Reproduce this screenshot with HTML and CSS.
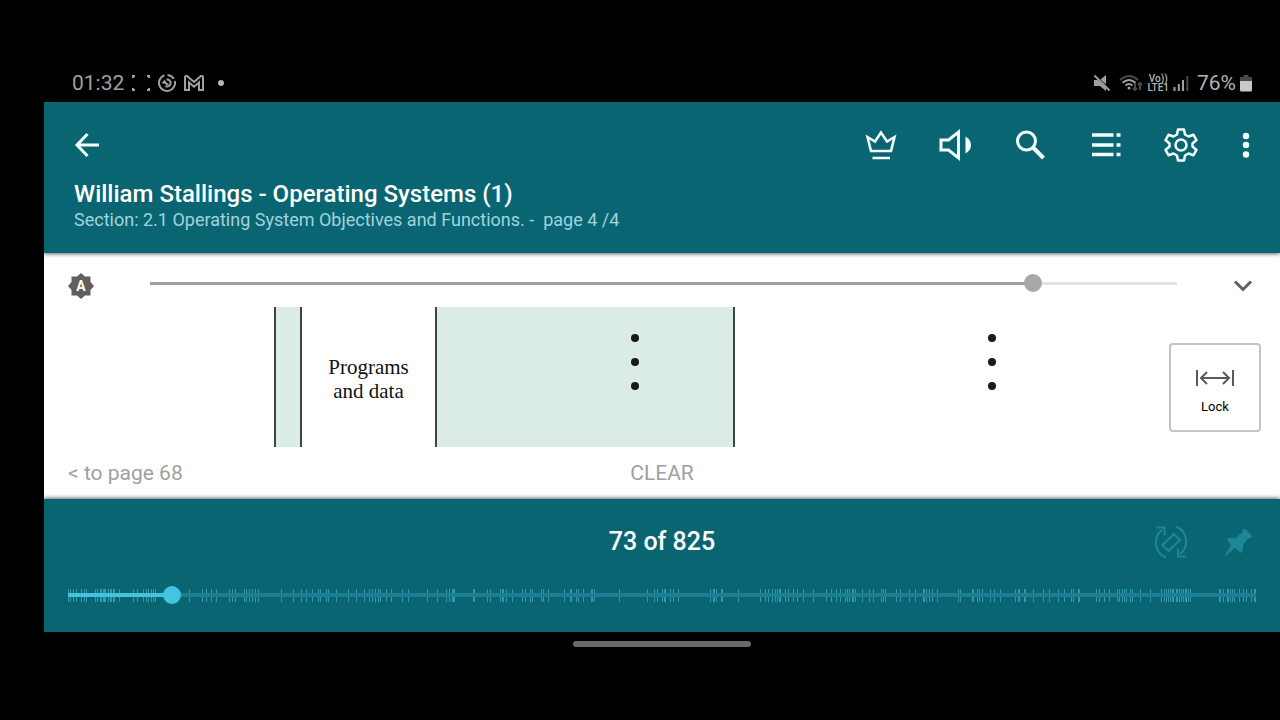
FILE: index.html
```
<!DOCTYPE html>
<html lang="en">
<head>
    <meta charset="UTF-8">
    <meta name="viewport" content="width=device-width, initial-scale=1.0">
    <title>William Stallings - Operating Systems (1)</title>
    <link rel="stylesheet" href="styles.css">
</head>
<body>

<div class="status-bar">
    <div class="status-group">
        <span class="time">01:32</span>
        <svg class="status-icon" width="18" height="18" viewBox="0 0 18 18"><path d="M1 4V2h2M15 2h2v2M17 14v2h-2M3 16H1v-2"/></svg>
        <svg class="status-icon" width="18" height="18" viewBox="0 0 18 18"><path d="M6.500 1.300A8 8 0 1 0 16.800 7M9.500 1A8 8 0 0 1 15.800 4.800M8.500 5.500a3.500 3.500 0 1 1-1 6.500"/><path class="solid" d="M3.500 9l3-3.200L9 9l2 1-2 1.500L7.500 10z"/></svg>
        <svg class="status-icon" width="20" height="18" viewBox="0 0 20 18"><path d="M1 16V3.500Q1 1.500 3 2l7 6 7-6q2-.5 2 1.500V16h-4V8.500l-5 4.200-5-4.200V16z"/></svg>
        <span class="more-dot"></span>
    </div>
    <div class="status-group status-right">
        <svg class="status-icon" width="18" height="18" viewBox="0 0 18 18"><path class="solid" d="M1 6h3.500L13 14v3l-6-5H1zM7.500 5.500L13 1v9.500z"/><path d="M1.500 1.500l15 15"/></svg>
        <svg class="status-icon wifi" width="24" height="18" viewBox="0 0 24 18"><path class="faint" d="M1 6q9-8 18 0"/><path d="M3.500 8.800q6.500-5.600 13 0M6.500 11.500q3.500-3 7 0"/><circle class="solid" cx="10" cy="14" r="1.500"/><path class="faint" d="M16 9v7m-2-2 2 2 2-2M21 16V9m-2 2 2-2 2 2"/></svg>
        <span class="volte">Vo))<br>LTE1</span>
        <svg class="status-icon" width="16" height="18" viewBox="0 0 16 18"><path d="M1.500 13v4M5.800 10v7M10 6v11"/><path class="faint" d="M14.300 2v15"/></svg>
        <span class="battery-level">76%</span>
        <svg class="battery" width="12" height="18" viewBox="0 0 12 18"><path class="faint-fill" d="M3.500 1h5v2H12v5H0V3h3.500z"/><path d="M0 7h12v9q0 1.500-1.500 1.500h-9Q0 17.500 0 16z"/></svg>
    </div>
</div>

<header class="book-header">
    <div class="toolbar">
        <button class="icon-button back" aria-label="Back">
            <svg width="26" height="26" viewBox="0 0 26 26"><path d="M25 13H3M13.500 2L3 13l10.500 11"/></svg>
        </button>
        <div class="actions">
            <button class="icon-button" aria-label="Premium">
                <svg width="36" height="36" viewBox="0 0 36 36"><path d="M8 24L4.500 10l7.500 4.500 6-9 6 9 7.500-4.500L28 24zM9.500 31h17.500"/></svg>
            </button>
            <button class="icon-button" aria-label="Read aloud">
                <svg width="36" height="36" viewBox="0 0 36 36"><path class="heavy" d="M3 13h7.500L20.500 5v26l-10-8H3z"/><path class="fill" d="M27.500 9.500q5.500 3 5.500 8.500t-5.500 8.500z"/></svg>
            </button>
            <button class="icon-button" aria-label="Search">
                <svg width="36" height="36" viewBox="0 0 36 36"><circle class="heavy" cx="13.500" cy="14" r="9"/><path class="heavier" d="M20 20.500L30.500 31"/></svg>
            </button>
            <button class="icon-button" aria-label="Contents">
                <svg width="36" height="36" viewBox="0 0 36 36"><path class="lines" d="M4 8h21.500M4 18h21.500M4 27.500h21.500M28.500 8h4M28.500 18h4M28.500 27.500h4"/></svg>
            </button>
            <button class="icon-button" aria-label="Settings">
                <svg width="36" height="36" viewBox="0 0 36 36"><path class="gear" d="M15 2.500h6l1 5 3.500 2 5-1.700 3 5.200-4 3.500v3l4 3.500-3 5.200-5-1.700-3.500 2-1 5h-6l-1-5-3.500-2-5 1.700-3-5.200 4-3.500v-3l-4-3.500 3-5.200 5 1.700 3.500-2z"/><circle class="gear" cx="18" cy="18" r="5.500"/></svg>
            </button>
            <button class="icon-button" aria-label="More options">
                <svg width="16" height="36" viewBox="0 0 16 36"><circle class="fill" cx="8" cy="9" r="3.200"/><circle class="fill" cx="8" cy="18" r="3.200"/><circle class="fill" cx="8" cy="27.500" r="3.200"/></svg>
            </button>
        </div>
    </div>
    <h1>William Stallings - Operating Systems (1)</h1>
    <p class="section-name">Section: 2.1 Operating System Objectives and Functions. -&nbsp; page 4 /4</p>
</header>

<main class="reader">
    <div class="brightness">
        <button class="icon-button" aria-label="Automatic brightness">
            <svg width="26" height="26" viewBox="0 0 26 26"><path class="badge" d="M13 0l4 3.500h5.500V9L26 13l-3.500 4v5.500H17L13 26l-4-3.500H3.500V17L0 13l3.500-4V3.500H9z"/><text x="13" y="18" text-anchor="middle">A</text></svg>
        </button>
        <div class="slider">
            <div class="track"></div>
            <input type="range" id="brightness" min="0" max="100" value="86" aria-label="Brightness">
        </div>
        <button class="icon-button" aria-label="Collapse">
            <svg width="20" height="26" viewBox="0 0 20 26"><path class="chevron" d="M2 8.500l8 8 8-8"/></svg>
        </button>
    </div>

    <div class="page">
        <div class="memory narrow"></div>
        <div class="programs">Programs<br>and data</div>
        <div class="memory wide">
            <div class="dots"><span></span><span></span><span></span></div>
        </div>
        <div class="dots outside"><span></span><span></span><span></span></div>
        <button class="lock">
            <svg width="38" height="18" viewBox="0 0 38 18"><path d="M1 1v16M37 1v16M6 9h26M11 3L5 9l6 6M27 3l6 6-6 6"/></svg>
            Lock
        </button>
    </div>

    <div class="history">
        <button>&lt; to page 68</button>
        <button class="clear">CLEAR</button>
    </div>
</main>

<footer class="book-footer">
    <div class="position">
        <label for="pageSlider">73 of 825</label>
        <div class="footer-actions">
            <button class="icon-button" aria-label="Rotation">
                <svg width="36" height="36" viewBox="0 0 36 36"><path d="M13 33.500A16 16 0 0 1 9 6M3.500 3.500h8v8M23 2.500A16 16 0 0 1 27 30M33 32.500h-8v-8"/><path d="M9.500 21L21 10l6 6-11.500 11z"/></svg>
            </button>
            <button class="icon-button" aria-label="Pin">
                <svg width="30" height="30" viewBox="0 0 30 30"><path class="pin" d="M20 1.500q6 1 9 9l-4 1-5 6q1 5-2 8.500l-6-5L1 30 8 18 3.500 12q4-2 8.500-.5l7-6z"/></svg>
            </button>
        </div>
    </div>
    <div class="slider page-slider">
        <svg class="ticks" viewBox="0 0 1188 12" preserveAspectRatio="none"><path id="ticks"/></svg>
        <div class="track"></div>
        <input type="range" id="pageSlider" min="1" max="825" value="73">
    </div>
</footer>

<div class="home-bar"></div>

<script>
    // chapter marks along the page slider
    const marks = [
        0, 2, 5, 8, 13, 16, 18, 27, 29, 32, 33, 35, 36, 37, 40, 42, 43, 45, 46, 51, 65, 69, 75, 78, 80, 83, 85, 87,
        121, 134, 138, 143, 148, 161, 164, 167, 176, 178, 181, 184, 187, 190, 213, 225, 233, 238, 244, 250, 252, 258,
        260, 268, 280, 288, 296, 301, 304, 307, 310, 312, 318, 323, 334, 340, 359, 369, 378, 381, 384, 385, 386, 405,
        406, 419, 422, 432, 434, 435, 438, 444, 454, 457, 462, 464, 473, 475, 480, 496, 502, 503, 508, 510, 515, 523,
        524, 526, 551, 579, 586, 589, 594, 596, 597, 602, 605, 610, 642, 645, 646, 648, 653, 654, 670, 692, 697,
        700, 704, 707, 709, 711, 712, 717, 720, 725, 729, 735, 745, 758, 763, 768, 772, 777, 779, 781, 784, 785, 787,
        794, 801, 805, 813, 815, 817, 828, 832, 841, 847, 855, 856, 858, 861, 864, 869, 890, 892, 904, 905, 909, 911,
        914, 922, 926, 932, 947, 950, 951, 956, 957, 965, 975, 981, 990, 996, 1003, 1005, 1010, 1011, 1028, 1031,
        1036, 1041, 1049, 1051, 1054, 1056, 1058, 1062, 1064, 1072, 1082, 1093, 1096, 1098, 1100, 1102, 1104, 1105,
        1108, 1109, 1111, 1113, 1115, 1117, 1118, 1120, 1122, 1151, 1152, 1155, 1159, 1160, 1162, 1164, 1166, 1171,
        1175, 1178, 1183, 1186, 1187
    ];
    document.getElementById('ticks').setAttribute('d', marks.map(x => `M${x} 0h1v12h-1z`).join(''));

    function fill(input) {
        const part = (input.value - input.min) / (input.max - input.min) * 100;
        input.parentElement.style.setProperty('--filled', part + '%');
    }

    document.querySelectorAll('input[type=range]').forEach(input => {
        fill(input);
        input.addEventListener('input', () => fill(input));
    });

    const pageSlider = document.getElementById('pageSlider');
    pageSlider.addEventListener('input', () => {
        document.querySelector('label[for=pageSlider]').innerText = `${pageSlider.value} of 825`;
    });
</script>

</body>
</html>
```
FILE: styles.css
```
* {
    box-sizing: border-box;
}
body {
    margin: 0;
    padding: 64px 0 0 44px;
    background-color: #000;
    font-family: Roboto, sans-serif;
}
button {
    font-family: inherit;
    padding: 0;
    border: none;
    background: none;
    cursor: pointer;
}
svg {
    display: block;
    fill: none;
}
.icon-button {
    display: block;
    flex: none;
}

/* status bar */
.status-bar {
    display: flex;
    justify-content: space-between;
    align-items: center;
    height: 38px;
    padding: 0 28px;
    color: #a0a0a0;
    font-size: 21px;
}
.status-group {
    display: flex;
    align-items: center;
    gap: 8px;
}
.status-right {
    color: #b4b4b4;
    gap: 4px;
}
.status-icon {
    stroke: #a0a0a0;
    stroke-width: 2;
}
.status-icon .solid {
    fill: #a0a0a0;
    stroke: none;
}
.status-icon .faint {
    stroke: #484848;
}
.wifi {
    margin-left: 4px;
}
.more-dot {
    width: 6px;
    height: 6px;
    margin-left: 6px;
    border-radius: 50%;
    background-color: #b4b4b4;
}
.volte {
    font-size: 10px;
    font-weight: 500;
    line-height: 9px;
    text-align: center;
}
.battery-level {
    margin-left: 4px;
}
.battery {
    fill: #c8c8c8;
}
.battery .faint-fill {
    fill: #484848;
}

/* header */
.book-header {
    position: relative;
    padding: 25px 26px 22px 30px;
    background-color: #0a6572;
    color: #fff;
    box-shadow: 0 1px 4px rgba(0, 0, 0, 0.6);
}
.toolbar,
.actions {
    display: flex;
    align-items: center;
    justify-content: space-between;
}
.actions {
    gap: 39px;
}
.toolbar svg {
    stroke: #f4ffff;
    stroke-width: 2.5;
}
.toolbar .back svg,
.toolbar .heavy {
    stroke-width: 3;
}
.toolbar .gear {
    stroke-linejoin: round;
}
.toolbar .lines {
    stroke-width: 3.5;
}
.toolbar .heavier {
    stroke-width: 4;
}
.toolbar .fill {
    fill: #f4ffff;
    stroke: none;
}
.book-header h1 {
    margin: 16px 0 0;
    font-size: 24px;
    font-weight: 500;
    line-height: 30px;
}
.section-name {
    margin: 0;
    font-size: 18px;
    line-height: 22px;
    color: #a0d3dc;
}

/* sliders */
.slider {
    display: grid;
    flex: 1;
    align-items: center;
    height: 20px;
}
.slider > * {
    grid-area: 1 / 1;
}
.track {
    height: 3px;
    background: linear-gradient(to right, #a0a0a0 var(--filled), #e4e4e4 var(--filled));
}
.slider input {
    appearance: none;
    height: 20px;
    margin: 0 -9px;
    background: none;
}
.slider input::-webkit-slider-thumb {
    appearance: none;
    width: 18px;
    height: 18px;
    border-radius: 50%;
    background-color: #a8a8a8;
}

/* reader */
.reader {
    padding: 20px 0 12px;
    background-color: #fff;
}
.brightness {
    display: flex;
    gap: 56px;
    padding: 0 27px 0 24px;
}
.badge {
    fill: #5f5f5f;
}
.brightness text {
    fill: #fff;
    font-size: 14px;
    font-weight: 700;
}
.chevron {
    stroke: #5f5f5f;
    stroke-width: 3;
}
.page {
    display: flex;
    height: 140px;
    margin-top: 8px;
    padding: 0 19px 0 230px;
}
.memory {
    border: solid #3c4444;
    border-width: 0 2px;
    background-color: #dbebe8;
}
.narrow {
    width: 28px;
}
.programs {
    width: 133px;
    padding-top: 48px;
    font-family: "Liberation Serif", serif;
    font-size: 21px;
    line-height: 24px;
    text-align: center;
    color: #111;
}
.wide {
    width: 300px;
    padding-left: 194px;
}
.dots {
    display: flex;
    flex-direction: column;
    gap: 16px;
    padding-top: 27px;
}
.dots span {
    width: 8px;
    height: 8px;
    border-radius: 50%;
    background-color: #1a1a1a;
}
.outside {
    margin-left: 253px;
}
.lock {
    display: flex;
    flex-direction: column;
    align-items: center;
    gap: 12px;
    width: 92px;
    height: 89px;
    margin: 36px 0 0 auto;
    padding-top: 24px;
    border: 2px solid #c4c4c4;
    border-radius: 4px;
    font-size: 13px;
    line-height: 16px;
    color: #000;
}
.lock svg {
    stroke: #5a5a5a;
    stroke-width: 2;
}
.history {
    display: grid;
    grid-template-columns: 1fr auto 1fr;
    margin-top: 12px;
    padding: 0 24px;
}
.history button {
    justify-self: start;
    font-size: 21px;
    line-height: 28px;
    color: #a0a0a0;
}

/* footer */
.book-footer {
    position: relative;
    padding: 25px 24px 27px;
    background-color: #0a6572;
    box-shadow: 0 -1px 4px rgba(0, 0, 0, 0.6);
}
.position {
    display: grid;
    grid-template-columns: 1fr auto 1fr;
    align-items: center;
}
.position label {
    grid-column: 2;
    font-size: 25px;
    font-weight: 500;
    line-height: 36px;
    color: #fff;
}
.footer-actions {
    display: flex;
    align-items: center;
    justify-content: flex-end;
    gap: 34px;
    padding-right: 3px;
}
.footer-actions svg {
    stroke: #1d8799;
    stroke-width: 2;
}
.footer-actions .pin {
    fill: #1d8799;
    stroke: none;
}
.page-slider {
    margin-top: 25px;
}
.page-slider .track {
    height: 4px;
    background: linear-gradient(to right, #44c3dc var(--filled), #1d7f90 var(--filled));
}
.ticks {
    width: 100%;
    height: 13px;
    fill: #2f9bb0;
}
.page-slider input::-webkit-slider-thumb {
    background-color: #44c3e2;
}

.home-bar {
    width: 178px;
    height: 6px;
    margin: 9px auto 0;
    border-radius: 3px;
    background-color: #6a6a6a;
}
```
